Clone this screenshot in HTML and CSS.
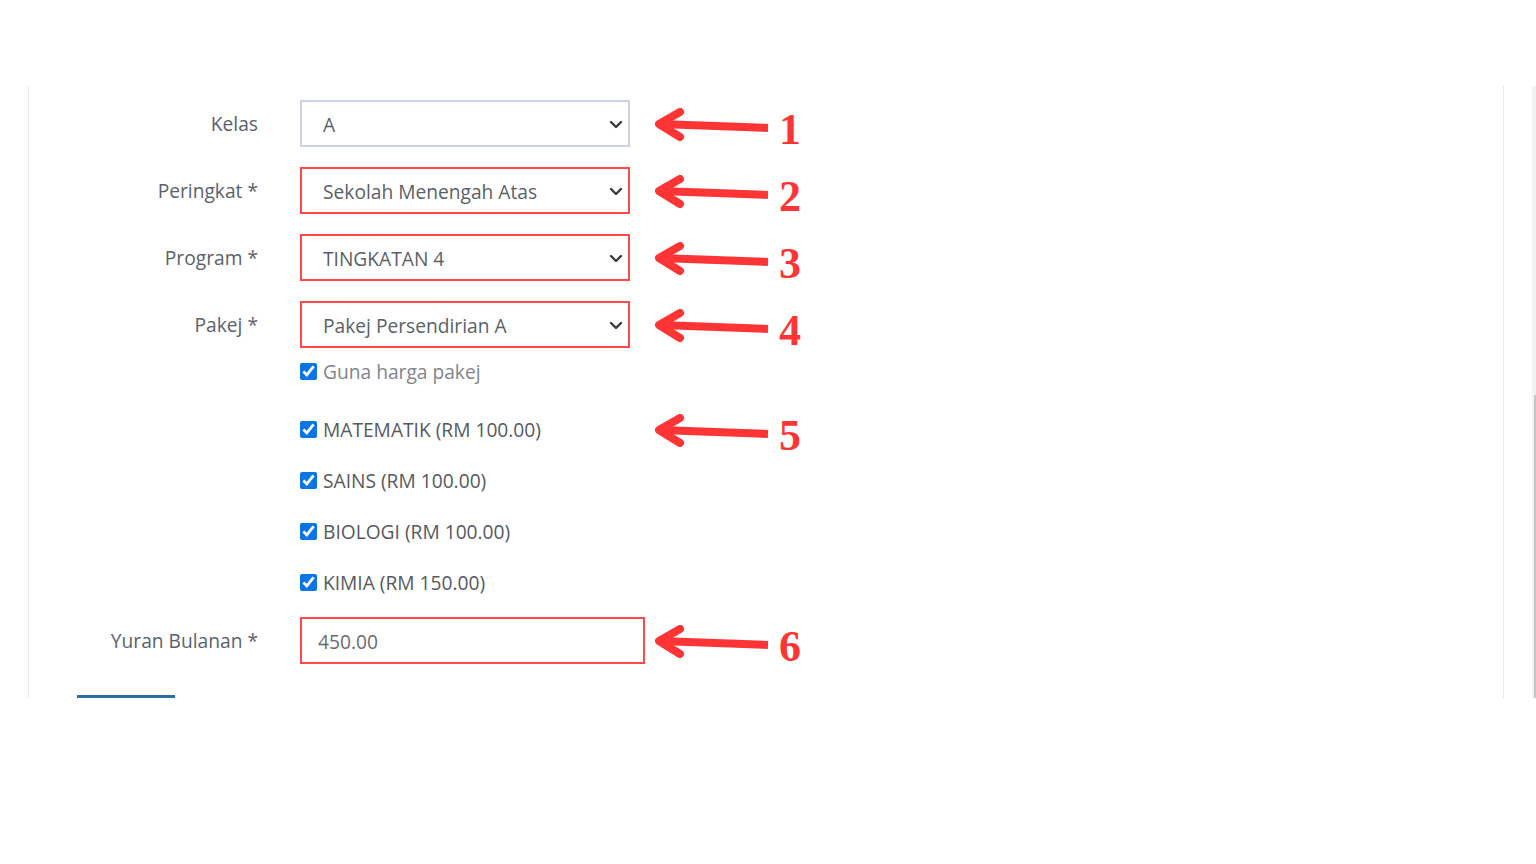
FILE: index.html
```html
<!DOCTYPE html>
<html lang="ms">
<head>
<meta charset="utf-8">
<title>Borang Pendaftaran</title>
<link rel="stylesheet" href="styles.css">
</head>
<body>
<div class="page">
  <div class="card">
    <form class="form">
      <div class="row">
        <label class="label">Kelas</label>
        <div class="control">
          <div class="select-wrap">
            <select class="select neutral"><option>A</option></select>
            <svg class="chev" viewBox="0 0 14 9" width="14" height="9"><polyline points="2,2 7,7 12,2" fill="none" stroke="#3a3a3a" stroke-width="2.4" stroke-linecap="round" stroke-linejoin="round"/></svg>
          </div>
        </div>
        <div class="note">
          <svg class="arrow" viewBox="0 0 120 36" width="120" height="36"><line x1="6" y1="16" x2="114" y2="20" stroke="#ff3535" stroke-width="8"/><polyline points="26,4 5,16 26,29" fill="none" stroke="#ff3535" stroke-width="8" stroke-linecap="round" stroke-linejoin="round"/></svg>
          <span class="num">1</span>
        </div>
      </div>

      <div class="row">
        <label class="label">Peringkat *</label>
        <div class="control">
          <div class="select-wrap">
            <select class="select invalid"><option>Sekolah Menengah Atas</option></select>
            <svg class="chev" viewBox="0 0 14 9" width="14" height="9"><polyline points="2,2 7,7 12,2" fill="none" stroke="#3a3a3a" stroke-width="2.4" stroke-linecap="round" stroke-linejoin="round"/></svg>
          </div>
        </div>
        <div class="note">
          <svg class="arrow" viewBox="0 0 120 36" width="120" height="36"><line x1="6" y1="16" x2="114" y2="20" stroke="#ff3535" stroke-width="8"/><polyline points="26,4 5,16 26,29" fill="none" stroke="#ff3535" stroke-width="8" stroke-linecap="round" stroke-linejoin="round"/></svg>
          <span class="num">2</span>
        </div>
      </div>

      <div class="row">
        <label class="label">Program *</label>
        <div class="control">
          <div class="select-wrap">
            <select class="select invalid"><option>TINGKATAN 4</option></select>
            <svg class="chev" viewBox="0 0 14 9" width="14" height="9"><polyline points="2,2 7,7 12,2" fill="none" stroke="#3a3a3a" stroke-width="2.4" stroke-linecap="round" stroke-linejoin="round"/></svg>
          </div>
        </div>
        <div class="note">
          <svg class="arrow" viewBox="0 0 120 36" width="120" height="36"><line x1="6" y1="16" x2="114" y2="20" stroke="#ff3535" stroke-width="8"/><polyline points="26,4 5,16 26,29" fill="none" stroke="#ff3535" stroke-width="8" stroke-linecap="round" stroke-linejoin="round"/></svg>
          <span class="num">3</span>
        </div>
      </div>

      <div class="row">
        <label class="label">Pakej *</label>
        <div class="control">
          <div class="select-wrap">
            <select class="select invalid"><option>Pakej Persendirian A</option></select>
            <svg class="chev" viewBox="0 0 14 9" width="14" height="9"><polyline points="2,2 7,7 12,2" fill="none" stroke="#3a3a3a" stroke-width="2.4" stroke-linecap="round" stroke-linejoin="round"/></svg>
          </div>
        </div>
        <div class="note">
          <svg class="arrow" viewBox="0 0 120 36" width="120" height="36"><line x1="6" y1="16" x2="114" y2="20" stroke="#ff3535" stroke-width="8"/><polyline points="26,4 5,16 26,29" fill="none" stroke="#ff3535" stroke-width="8" stroke-linecap="round" stroke-linejoin="round"/></svg>
          <span class="num">4</span>
        </div>
      </div>

      <div class="row check-row first-check">
        <div class="label"></div>
        <div class="control">
          <label class="check muted"><input type="checkbox" checked> Guna harga pakej</label>
        </div>
      </div>

      <div class="row check-row subj-first">
        <div class="label"></div>
        <div class="control">
          <label class="check"><input type="checkbox" checked> MATEMATIK (RM 100.00)</label>
        </div>
        <div class="note">
          <svg class="arrow" viewBox="0 0 120 36" width="120" height="36"><line x1="6" y1="16" x2="114" y2="20" stroke="#ff3535" stroke-width="8"/><polyline points="26,4 5,16 26,29" fill="none" stroke="#ff3535" stroke-width="8" stroke-linecap="round" stroke-linejoin="round"/></svg>
          <span class="num">5</span>
        </div>
      </div>

      <div class="row check-row subj">
        <div class="label"></div>
        <div class="control">
          <label class="check"><input type="checkbox" checked> SAINS (RM 100.00)</label>
        </div>
      </div>

      <div class="row check-row subj">
        <div class="label"></div>
        <div class="control">
          <label class="check"><input type="checkbox" checked> BIOLOGI (RM 100.00)</label>
        </div>
      </div>

      <div class="row check-row subj">
        <div class="label"></div>
        <div class="control">
          <label class="check"><input type="checkbox" checked> KIMIA (RM 150.00)</label>
        </div>
      </div>

      <div class="row fee-row">
        <label class="label">Yuran Bulanan *</label>
        <div class="control">
          <input class="text-input invalid" type="text" value="450.00">
        </div>
        <div class="note">
          <svg class="arrow" viewBox="0 0 120 36" width="120" height="36"><line x1="6" y1="16" x2="114" y2="20" stroke="#ff3535" stroke-width="8"/><polyline points="26,4 5,16 26,29" fill="none" stroke="#ff3535" stroke-width="8" stroke-linecap="round" stroke-linejoin="round"/></svg>
          <span class="num">6</span>
        </div>
      </div>
    </form>
    <div class="tab-line"></div>
  </div>
  <div class="scroll"><div class="thumb"></div></div>
</div>
</body>
</html>
```

FILE: styles.css
```css
* { box-sizing: border-box; }

html, body {
  margin: 0;
  padding: 0;
  background: #ffffff;
}

body {
  font-family: "Open Sans", "Noto Sans", "DejaVu Sans", sans-serif;
  font-size: 19.2px;
  color: #5b616c;
  height: 864px;
  overflow: hidden;
}

.page {
  display: flex;
  align-items: flex-start;
  padding-top: 86px;
}

.card {
  margin-left: 28px;
  width: 1476px;
  height: 612px;
  border-left: 1px solid #e7eaf0;
  border-right: 1px solid #e7eaf0;
  padding-top: 14px;
}

.scroll {
  margin-left: 28px;
  width: 4px;
  height: 612px;
  background: #f2f2f2;
  padding-top: 309px;
}

.thumb {
  margin-left: 2px;
  width: 2px;
  height: 303px;
  background: #c6c6c6;
}

.form {
  display: flex;
  flex-direction: column;
}

.row {
  display: flex;
  align-items: center;
  height: 47px;
  margin-top: 20px;
}

.row:first-child { margin-top: 0; }

.label {
  width: 229px;
  text-align: right;
  color: #5b616c;
  line-height: 1;
  padding-top: 1px;
}

.control {
  margin-left: 42px;
  width: 350px;
  display: flex;
  align-items: center;
}

.select-wrap {
  position: relative;
  width: 330px;
  height: 47px;
}

.select {
  appearance: none;
  -webkit-appearance: none;
  width: 330px;
  height: 47px;
  border: 2px solid #cdd3e2;
  border-radius: 0;
  background: #ffffff;
  padding: 1px 0 0 21px;
  font-family: "Open Sans", "Noto Sans", sans-serif;
  font-size: 19.2px;
  color: #5a5f67;
  outline: none;
}

.select.invalid { border-color: #ff4a4a; }

.chev {
  position: absolute;
  right: 7px;
  top: 20px;
}

.check-row {
  height: 26px;
}

.first-check { margin-top: 11px; }
.subj-first { margin-top: 32px; }
.subj { margin-top: 25px; }

.check {
  display: flex;
  align-items: center;
  gap: 6px;
  color: #555a62;
  white-space: nowrap;
  line-height: 1;
}

.check.muted { color: #80858d; }

.check input {
  width: 17px;
  height: 17px;
  margin: 0;
  accent-color: #0a76e6;
}

.fee-row { margin-top: 21px; }

.text-input {
  width: 345px;
  height: 47px;
  border: 2px solid #ff4a4a;
  border-radius: 0;
  padding: 1px 0 0 16px;
  font-family: "Open Sans", "Noto Sans", sans-serif;
  font-size: 19.2px;
  color: #676b72;
  background: #ffffff;
  outline: none;
}

.note {
  display: flex;
  align-items: center;
}

.arrow {
  display: block;
  margin-left: 4px;
  margin-top: 4px;
}

.num {
  margin-left: 5px;
  margin-top: 12px;
  font-family: "Liberation Serif", "DejaVu Serif", serif;
  font-weight: bold;
  font-size: 44px;
  line-height: 1;
  color: #ff3535;
}

.tab-line {
  margin-top: 31px;
  margin-left: 48px;
  width: 98px;
  height: 3px;
  background: #2e6ca6;
}
```
